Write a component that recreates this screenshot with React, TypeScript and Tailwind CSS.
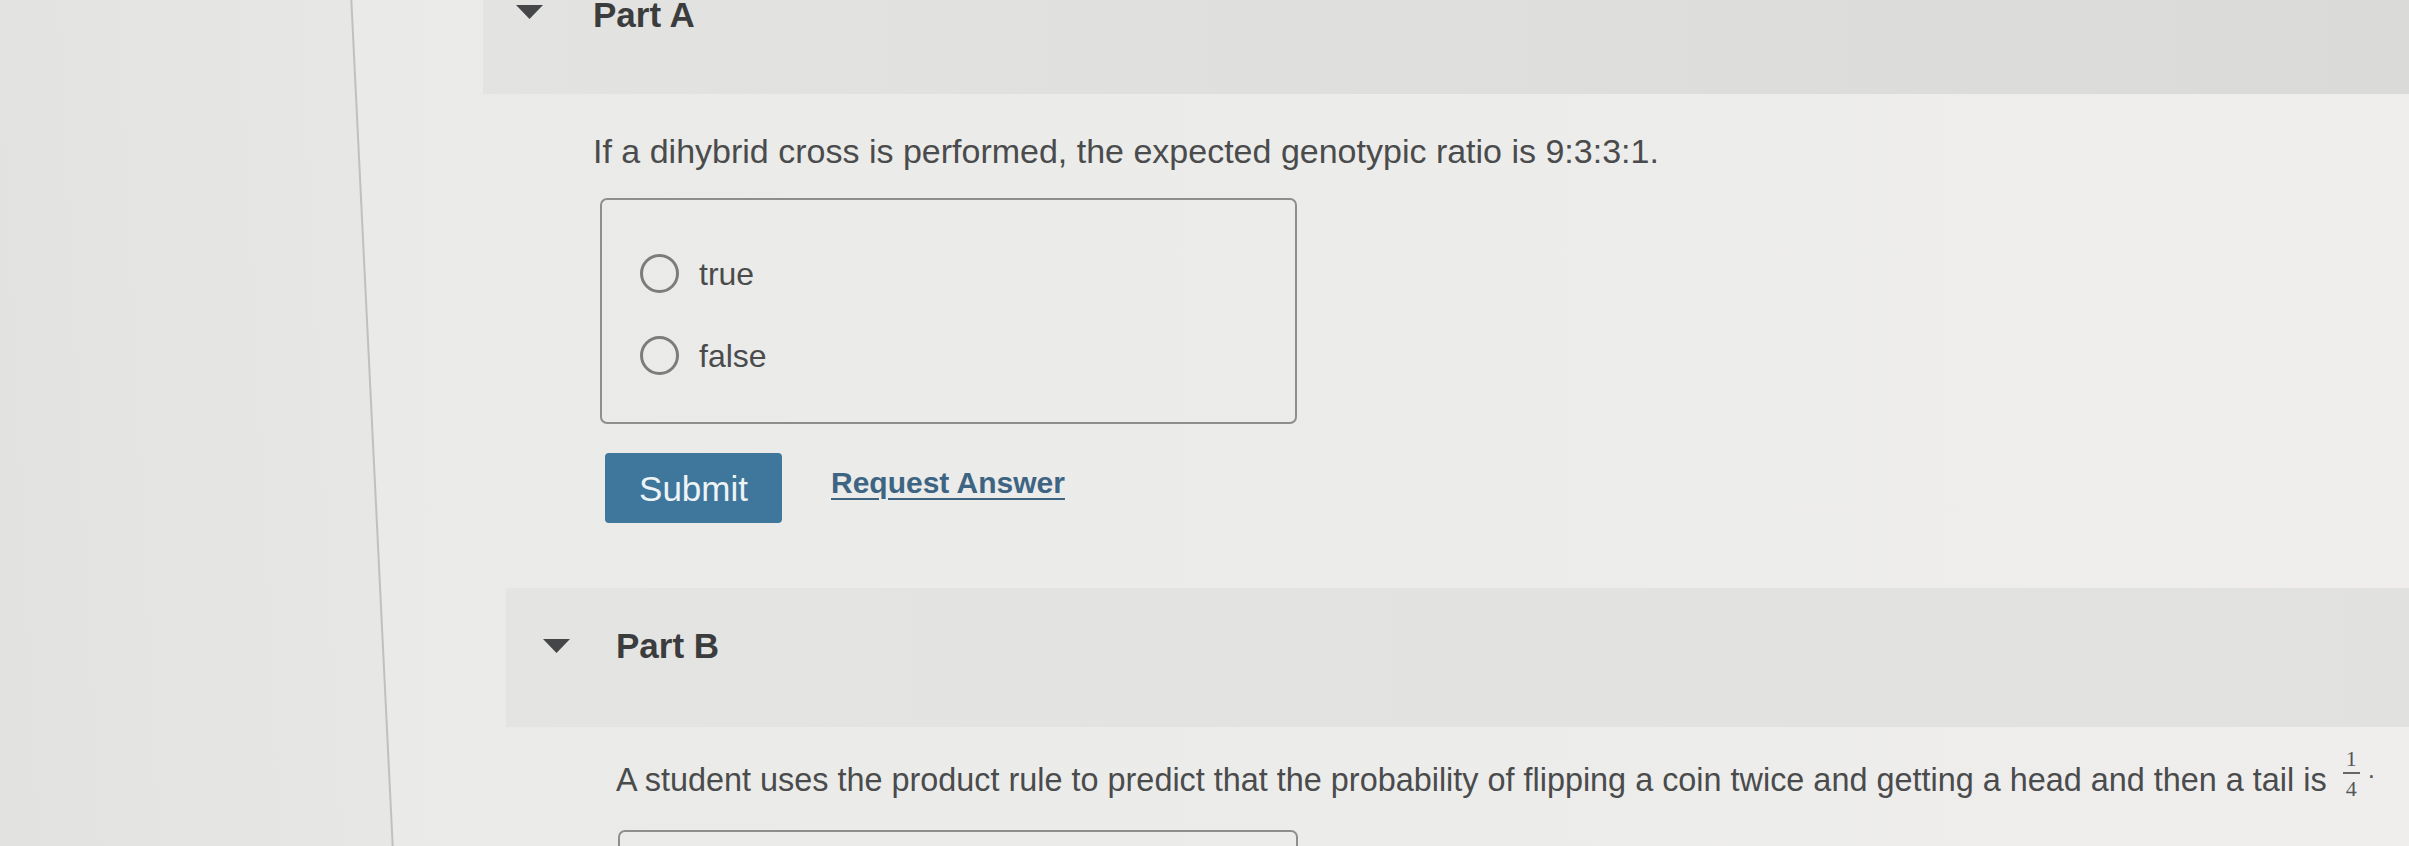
import React from "react";

function Caret({ className = "" }: { className?: string }) {
  return (
    <svg width="27" height="14" viewBox="0 0 27 14" className={className}>
      <polygon points="0,0 27,0 13.5,14" fill="#454647" />
    </svg>
  );
}

function Radio({ label }: { label: string }) {
  return (
    <label className="flex items-center gap-[20px]">
      <span className="block w-[39px] h-[39px] rounded-full border-[3px] border-[#7b7c7c]" />
      <span className="text-[32px] leading-[32px] text-[#4a4b4c]">{label}</span>
    </label>
  );
}

export default function App() {
  return (
    <div
      className="flex h-[846px] w-full overflow-hidden bg-[#eaeae8]"
      style={{ fontFamily: '"Liberation Sans", Arial, sans-serif' }}
    >
      {/* left rail */}
      <div className="-ml-[30px] w-[403px] shrink-0 skew-x-[2.8deg] bg-gradient-to-r from-[#e2e2e0] to-[#e7e7e5] border-r-2 border-[#c0c0be]" />

      {/* main */}
      <div className="flex-1 flex flex-col bg-gradient-to-r from-[#eaeae8] via-[#ececea] to-[#efeeed]">
        {/* Part A header */}
        <div className="ml-[110px] h-[94px] shrink-0 flex items-start bg-gradient-to-r from-[#e3e3e1] to-[#dadbd9]">
          <Caret className="ml-[33px] mt-[5px]" />
          <h2 className="ml-[50px] -mt-[3px] text-[35px] leading-[35px] font-bold text-[#3b3c3d]">Part A</h2>
        </div>

        {/* Part A body */}
        <p className="ml-[220px] mt-[40px] text-[34px] leading-[34px] text-[#4a4b4c]">
          If a dihybrid cross is performed, the expected genotypic ratio is 9:3:3:1.
        </p>

        <div className="ml-[227px] mt-[30px] w-[697px] h-[226px] shrink-0 rounded-[7px] border-2 border-[#8d8e8e] pl-[38px] pt-[54px] flex flex-col gap-[43px]">
          <Radio label="true" />
          <Radio label="false" />
        </div>

        <div className="ml-[232px] mt-[29px] flex items-start">
          <button className="w-[177px] h-[70px] rounded-[4px] bg-[#3f769c] text-[35px] leading-[35px] text-[#eef3f6]">
            Submit
          </button>
          <a className="ml-[49px] mt-[15px] text-[30px] leading-[30px] font-bold text-[#3d6483] underline decoration-2 underline-offset-[5px]">
            Request Answer
          </a>
        </div>

        {/* Part B header */}
        <div className="ml-[133px] mt-[65px] h-[139px] shrink-0 flex items-start bg-gradient-to-r from-[#e4e4e2] to-[#e1e2e0]">
          <Caret className="ml-[37px] mt-[51px]" />
          <h2 className="ml-[46px] mt-[40px] text-[35px] leading-[35px] font-bold text-[#3b3c3d]">Part B</h2>
        </div>

        {/* Part B body */}
        <p className="ml-[243px] mt-[37px] h-[33px] text-[32.4px] leading-[33px] text-[#4a4b4c] whitespace-nowrap">
          A student uses the product rule to predict that the probability of flipping a coin twice and getting a head and then a tail is
          <span className="relative -top-[25px] inline-flex items-center ml-[16px]">
            <span
              className="inline-flex flex-col items-center text-[22px] leading-[20px] text-[#555657]"
              style={{ fontFamily: '"Liberation Serif", "Times New Roman", serif' }}
            >
              <span>1</span>
              <span className="block w-[17px] h-[2px] mt-[3px] mb-[5px] bg-[#666768]" />
              <span>4</span>
            </span>
            <span className="ml-[8px] text-[26px] leading-[20px] -mt-[10px] text-[#555657]">.</span>
          </span>
        </p>

        <div className="ml-[245px] mt-[33px] w-[680px] h-[226px] shrink-0 rounded-[7px] border-2 border-[#8d8e8e]" />
      </div>
    </div>
  );
}
